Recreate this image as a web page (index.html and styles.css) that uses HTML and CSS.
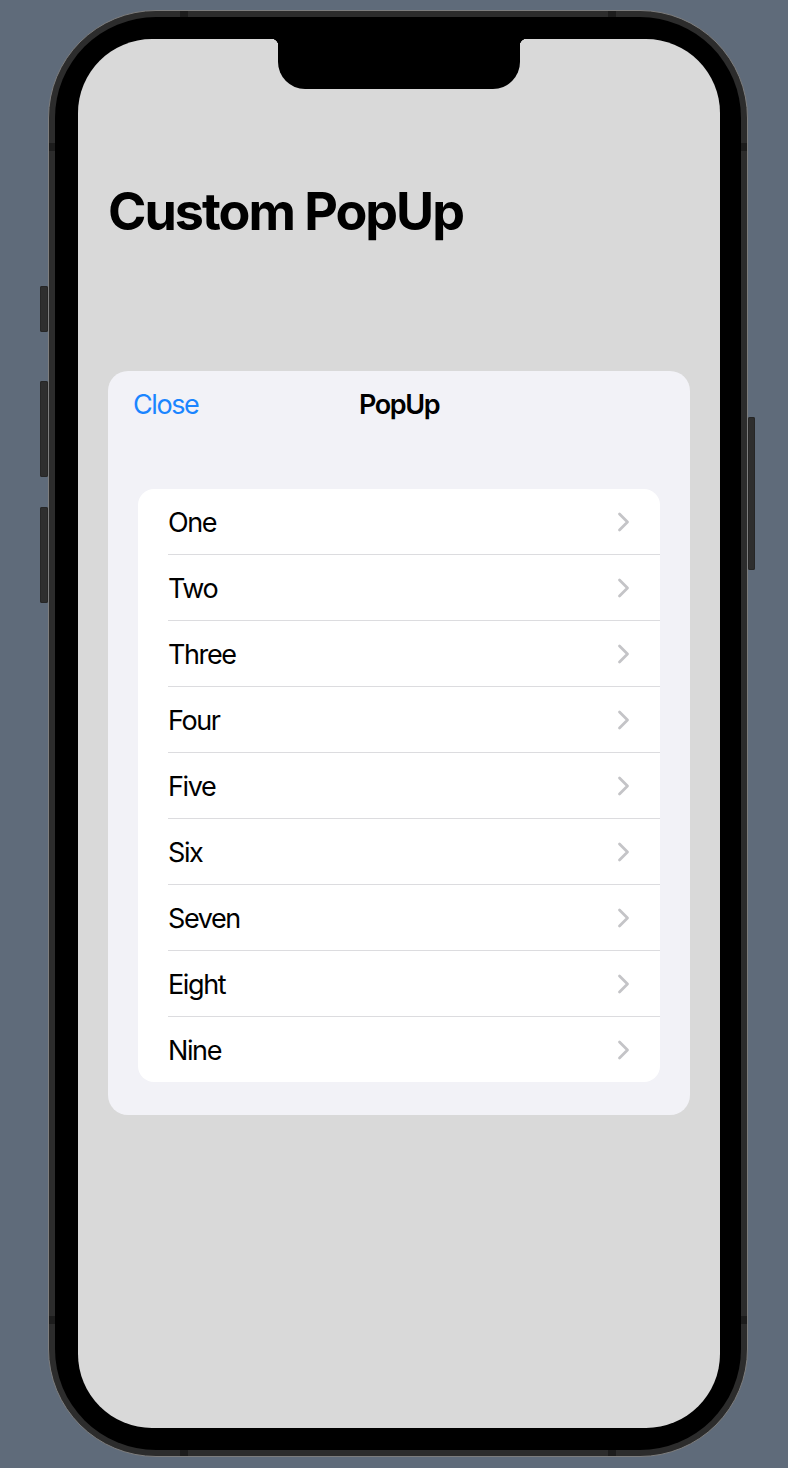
FILE: index.html
```html
<!DOCTYPE html>
<html>
<head>
<meta charset="utf-8">
<link rel="stylesheet" href="styles.css">
</head>
<body>
<div class="stage">
  <div class="phone">
    <span class="btn btn-mute"></span>
    <span class="btn btn-vol-up"></span>
    <span class="btn btn-vol-down"></span>
    <span class="btn btn-power"></span>
    <span class="band band-top-l"></span>
    <span class="band band-top-r"></span>
    <span class="band band-bot-l"></span>
    <span class="band band-bot-r"></span>
    <span class="band band-left-t"></span>
    <span class="band band-left-b"></span>
    <span class="band band-right-t"></span>
    <span class="band band-right-b"></span>
    <div class="bezel">
      <div class="screen">
        <div class="notch"></div>
        <h1 class="title">Custom PopUp</h1>
        <div class="popup">
          <div class="popup-header">
            <span class="close">Close</span>
            <span class="popup-title">PopUp</span>
            <span></span>
          </div>
          <ul class="list">
            <li class="row"><span>One</span><svg class="chev" viewBox="0 0 12 20"><path d="M2 2 L10 10 L2 18"/></svg></li>
            <li class="row"><span>Two</span><svg class="chev" viewBox="0 0 12 20"><path d="M2 2 L10 10 L2 18"/></svg></li>
            <li class="row"><span>Three</span><svg class="chev" viewBox="0 0 12 20"><path d="M2 2 L10 10 L2 18"/></svg></li>
            <li class="row"><span>Four</span><svg class="chev" viewBox="0 0 12 20"><path d="M2 2 L10 10 L2 18"/></svg></li>
            <li class="row"><span>Five</span><svg class="chev" viewBox="0 0 12 20"><path d="M2 2 L10 10 L2 18"/></svg></li>
            <li class="row"><span>Six</span><svg class="chev" viewBox="0 0 12 20"><path d="M2 2 L10 10 L2 18"/></svg></li>
            <li class="row"><span>Seven</span><svg class="chev" viewBox="0 0 12 20"><path d="M2 2 L10 10 L2 18"/></svg></li>
            <li class="row"><span>Eight</span><svg class="chev" viewBox="0 0 12 20"><path d="M2 2 L10 10 L2 18"/></svg></li>
            <li class="row"><span>Nine</span><svg class="chev" viewBox="0 0 12 20"><path d="M2 2 L10 10 L2 18"/></svg></li>
          </ul>
        </div>
      </div>
    </div>
  </div>
</div>
</body>
</html>
```
FILE: styles.css
```css
html, body {
  margin: 0;
  padding: 0;
}
body {
  background: #5f6b7a;
  width: 788px;
  height: 1468px;
  overflow: hidden;
  font-family: Inter, "Liberation Sans", sans-serif;
  color: #000;
}
.stage {
  padding: 10px 0 0 48px;
}
.phone {
  position: relative;
  box-sizing: border-box;
  width: 700px;
  height: 1447px;
  border: 1px solid #7d7d7d;
  background: #2c2c2c;
  border-radius: 108px;
  padding: 6px;
}
.btn {
  position: absolute;
  background: #2e2e2e;
  border-radius: 2px;
  box-shadow: inset 0 0 0 1px #262626;
}
.btn-mute { left: -9px; top: 275px; width: 8px; height: 46px; }
.btn-vol-up { left: -9px; top: 370px; width: 8px; height: 96px; }
.btn-vol-down { left: -9px; top: 496px; width: 8px; height: 96px; }
.btn-power { right: -8px; top: 406px; width: 7px; height: 153px; }
.band {
  position: absolute;
  background: #1c1c1c;
}
.band-top-l { top: 0; left: 131px; width: 8px; height: 6px; }
.band-top-r { top: 0; left: 559px; width: 8px; height: 6px; }
.band-bot-l { bottom: 0; left: 131px; width: 8px; height: 6px; }
.band-bot-r { bottom: 0; left: 559px; width: 8px; height: 6px; }
.band-left-t { left: 0; top: 132px; width: 6px; height: 8px; }
.band-left-b { left: 0; top: 1305px; width: 6px; height: 8px; }
.band-right-t { right: 0; top: 132px; width: 6px; height: 8px; }
.band-right-b { right: 0; top: 1305px; width: 6px; height: 8px; }
.bezel {
  box-sizing: border-box;
  height: 100%;
  background: #000;
  border-radius: 101px;
  padding: 22px 21px 22px 23px;
}
.screen {
  position: relative;
  height: 100%;
  background: #d9d9d9;
  border-radius: 74px;
  overflow: hidden;
}
.notch {
  position: absolute;
  top: 0;
  left: 200px;
  width: 242px;
  height: 50px;
  background: #000;
  border-radius: 0 0 27px 27px;
}
.notch::before, .notch::after {
  content: "";
  position: absolute;
  top: 0;
  width: 7px;
  height: 7px;
}
.notch::before {
  left: -7px;
  background: radial-gradient(circle at 0 100%, transparent 7px, #000 7.5px);
}
.notch::after {
  right: -7px;
  background: radial-gradient(circle at 100% 100%, transparent 7px, #000 7.5px);
}
.title {
  margin: 0;
  padding: 147px 0 0 30px;
  font-size: 52px;
  line-height: 52px;
  font-weight: 700;
  letter-spacing: -2px;
}
.popup {
  margin: 133px 30px 0;
  background: #f2f2f7;
  border-radius: 20px;
  padding: 0 30px 33px;
}
.popup-header {
  display: grid;
  grid-template-columns: 1fr auto 1fr;
  align-items: center;
  height: 66px;
  margin: 0 -5px 52px;
  font-size: 27px;
  letter-spacing: -1.4px;
}
.close {
  color: #1a85ff;
}
.popup-title {
  font-weight: 600;
}
.list {
  list-style: none;
  margin: 0;
  padding: 0;
  background: #fff;
  border-radius: 16px;
  overflow: hidden;
}
.row {
  display: flex;
  align-items: center;
  justify-content: space-between;
  height: 66px;
  margin-left: 30px;
  padding: 2px 30px 0 0;
  font-size: 27px;
  letter-spacing: -1.4px;
  box-sizing: border-box;
  border-bottom: 1px solid #dcdcdf;
}
.row:last-child {
  border-bottom: none;
  height: 65px;
}
.chev {
  width: 13px;
  height: 20px;
  margin-top: -2px;
  fill: none;
  stroke: #c4c4c7;
  stroke-width: 2.8;
  stroke-linecap: round;
  stroke-linejoin: round;
}
```
